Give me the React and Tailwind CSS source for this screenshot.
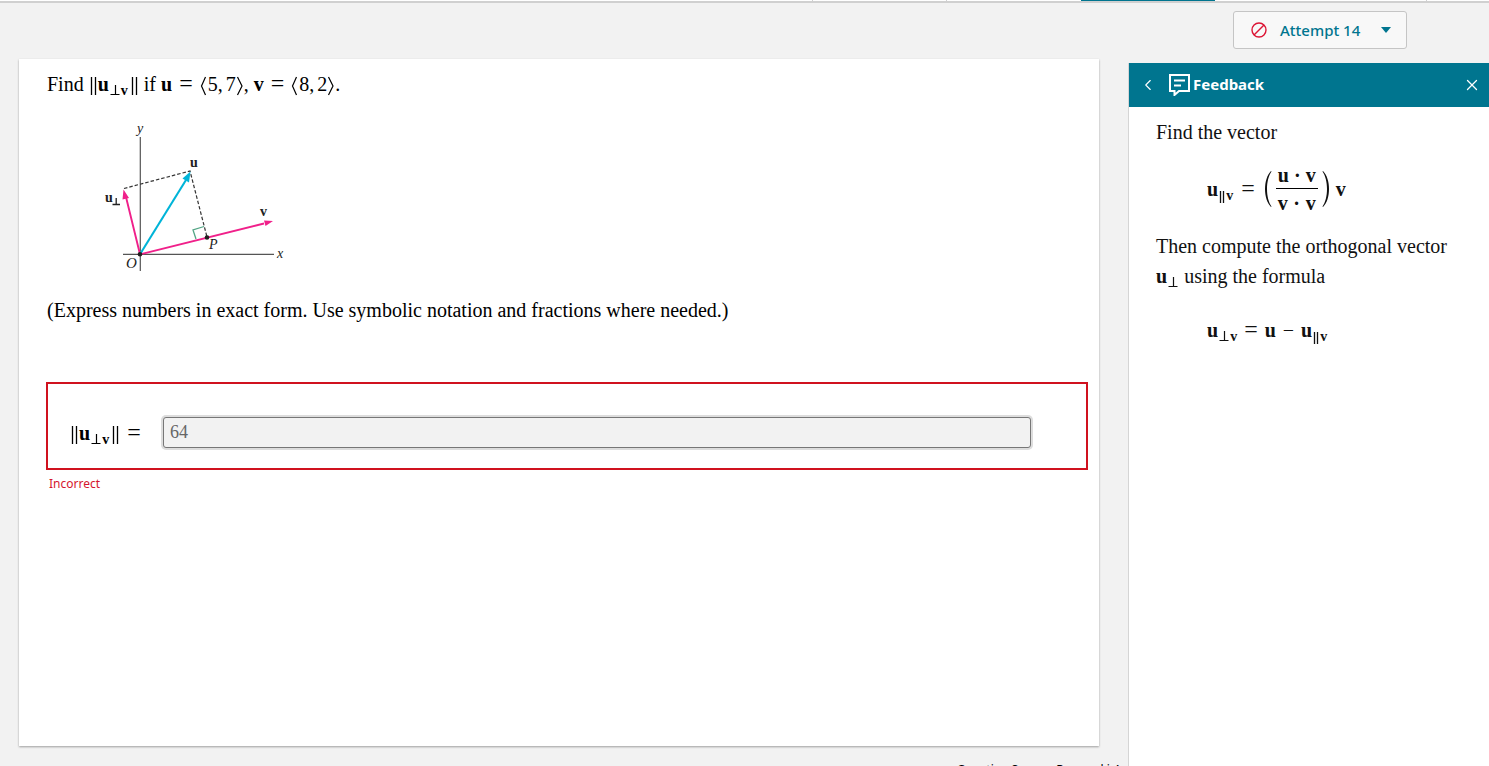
import { ChevronLeft, X } from "lucide-react";

const serif = "font-['Liberation_Serif',serif]";

function Perp() {
  return (
    <svg role="img" aria-label="perpendicular" className="inline-block h-[10px] w-[12px] align-baseline" viewBox="0 0 12 10" fill="none" stroke="currentColor">
      <path d="M1.500 9.500H10.500M6.500 0V9.500" strokeWidth="1.200" />
    </svg>
  );
}

function Bars({ small = false }) {
  return (
    <svg
      role="img"
      aria-label={small ? "parallel" : "norm"}
      className={small ? "inline-block h-3 w-[8px] align-[-3px]" : "inline-block h-[18px] w-[9px] align-[-4px]"}
      viewBox={small ? "0 0 8 12" : "0 0 9 18"}
      fill="none"
      stroke="currentColor"
      strokeWidth="1.300"
    >
      <path d={small ? "M2.500 0V12M5.500 0V12" : "M2.500 0V18M6.500 0V18"} />
    </svg>
  );
}

function Angle({ right = false }) {
  return (
    <svg role="img" aria-label={right ? "right angle bracket" : "left angle bracket"} className="inline-block h-5 w-2 align-[-5px]" viewBox="0 0 8 20" fill="none" stroke="currentColor" strokeWidth="1.200">
      <path d={right ? "M1.500 1L6 10L1.500 19" : "M5.500 1L1.500 10L5.500 19"} />
    </svg>
  );
}

function Equals() {
  return <span className="mx-[2px] text-2xl leading-none">=</span>;
}

function U({ perp = false, par = false, v = false }) {
  return (
    <span className="whitespace-nowrap">
      <b>u</b>
      <span className="inline-block align-[-4px] text-sm leading-none font-bold">
        {perp && <Perp />}
        {par && <Bars small />}
        {v && "v"}
      </span>
    </span>
  );
}

function Norm() {
  return (
    <span className="whitespace-nowrap">
      <Bars />
      <U perp v />
      <span className="ml-[2px]"><Bars /></span>
    </span>
  );
}

function Paren({ right = false }) {
  return (
    <svg role="img" aria-label={right ? "close" : "open"} className="h-[38px] w-2" viewBox="0 0 8 38" fill="currentColor">
      <path d={right ? "M1 1C9 9 9 29 1 37L.5 36.500C6.500 28 6.500 10 .5 1.500Z" : "M7 1C-1 9-1 29 7 37L7.500 36.500C1.500 28 1.500 10 7.500 1.500Z"} />
    </svg>
  );
}

function VectorDiagram() {
  return (
    <svg role="img" aria-label="Vector u resolved along v and perpendicular to v" className="h-[160px] w-[200px]" viewBox="96 118 200 160">
      <g stroke="#555" strokeWidth="1.200" fill="none">
        <path d="M140.300 137V271M123 254.300H274" />
      </g>
      <path d="M124 188.500L190 171L207 237" stroke="#333" strokeWidth="1.200" strokeDasharray="3.500 2" fill="none" />
      <path d="M196 239L193 230L204 226.500" stroke="#53a585" strokeWidth="1.300" fill="none" />
      <g stroke="#f0208a" strokeWidth="1.900" fill="none">
        <path d="M140 254.300L126 197M140 254.300L264 223.500" />
      </g>
      <g fill="#f0208a">
        <path d="M123.500 189.500L129 198L122.500 199.500ZM273 221L265.500 226L264 220.500Z" />
      </g>
      <path d="M140 254.300L186 180" stroke="#00b4d8" strokeWidth="2.100" />
      <path d="M190.500 171.500L189 182.500L182.500 178.500Z" fill="#00b4d8" />
      <g fill="#231f20">
        <circle cx="140" cy="254.300" r="2.300" />
        <circle cx="207" cy="237.500" r="2.300" />
      </g>
      <g className="font-['Liberation_Serif',serif]" fill="#222" fontSize="14">
        <text x="137" y="133" fontStyle="italic">y</text>
        <text x="277" y="258" fontStyle="italic">x</text>
        <text x="126" y="268" fontStyle="italic" fontSize="15">O</text>
        <text x="209" y="249" fontStyle="italic">P</text>
        <text x="190" y="167" fontWeight="bold">u</text>
        <text x="260" y="216" fontWeight="bold">v</text>
        <text x="105" y="202" fontWeight="bold">u</text>
      </g>
      <path d="M112.500 204.500H120M116.200 198V204.500" stroke="#222" strokeWidth="1.300" />
    </svg>
  );
}

export default function App() {
  return (
    <div className="flex h-screen flex-col overflow-hidden bg-[#f2f2f2] font-['Noto_Sans',sans-serif] text-black">
      <header className="flex h-[3px] shrink-0 justify-end border-b-2 border-[#d0d0d0] bg-white">
        <div className="h-px w-[134px] border-l border-[#d0d0d0]" />
        <div className="h-px w-[135px] border-l border-[#d0d0d0]" />
        <div className="h-px w-[134px] bg-[#00758f]" />
        <div className="h-px w-[212px] border-r border-[#d0d0d0]" />
        <div className="h-px w-[62px]" />
      </header>
      <div className="flex min-h-0 flex-1">
        <main className="flex min-w-0 flex-1 flex-col pt-14 pr-[29px] pl-[19px]">
          <section className={`${serif} min-h-[687px] bg-white px-[28px] pt-[9px] text-xl leading-8 shadow-[0_1px_2px_rgba(0,0,0,0.35)]`}>
            <p>
              Find <Norm /> if <b>u</b> <Equals /> <Angle />5,<span className="ml-[3px]">7</span><Angle right />, <b>v</b> <Equals /> <Angle />8,<span className="ml-[3px]">2</span><Angle right />.
            </p>
            <div className="mt-[18px] ml-[49px] flex">
              <VectorDiagram />
            </div>
            <p className="mt-4">(Express numbers in exact form. Use symbolic notation and fractions where needed.)</p>
            <div className="mt-[56px] -mr-[17px] -ml-px flex h-[88px] items-center border-2 border-[#d0121f] pt-[14px] pr-[55px] pl-[22px]">
              <label htmlFor="answer" className="w-[93px] whitespace-nowrap">
                <Norm /> <Equals />
              </label>
              <input
                id="answer"
                disabled
                defaultValue="64"
                className="mb-px h-[31px] min-w-0 flex-1 rounded-[3px] border border-[#777] bg-[#f2f2f2] px-[6px] text-lg text-[#666] shadow-[0_0_0_2px_#ddd]"
              />
            </div>
            <p className="ml-[2px] font-['Noto_Sans',sans-serif] text-xs leading-7 text-[#d5152e]">Incorrect</p>
          </section>
          <footer className="mt-4 pl-[938px] text-xs whitespace-nowrap">Question Source: Rogawski 4e</footer>
        </main>
        <aside className="flex w-[361px] shrink-0 flex-col">
          <div className="h-15 pt-2 pl-[105px]">
            <button className="flex h-[38px] w-[174px] items-center rounded-[3px] border border-[#c5c5c5] bg-[#f8f8f8] pl-[17px] text-[15px] font-medium text-[#00758f]">
              <svg className="size-4" viewBox="0 0 16 16" fill="none" stroke="#dc1434" strokeWidth="1.400" aria-hidden="true">
                <circle cx="8" cy="8" r="7" />
                <path d="M3 13L13 3" />
              </svg>
              <span className="ml-[13px]">Attempt 14</span>
              <svg className="ml-auto mr-[15px] h-[6px] w-[10px]" viewBox="0 0 10 6" fill="currentColor" aria-hidden="true">
                <path d="M0 0H10L5 6Z" />
              </svg>
            </button>
          </div>
          <div className="flex-1 border-l border-[#d5d5d5] bg-white">
            <div className="flex h-11 items-center bg-[#00758f] pr-2 pb-px pl-[10px] text-white">
              <button aria-label="Back"><ChevronLeft className="size-[18px]" strokeWidth={1.5} /></button>
              <svg className="ml-3 h-[22px] w-[21px]" viewBox="0 0 21 22" fill="none" stroke="currentColor" strokeWidth="2" aria-hidden="true">
                <path d="M1 1H20V17H10L5.500 21V17H1Z" />
                <path d="M5 6.500H16M5 11.500H12" />
              </svg>
              <h2 className="ml-[3px] text-[15px] font-bold">Feedback</h2>
              <button aria-label="Close" className="ml-auto"><X className="size-[18px]" strokeWidth={1.700} /></button>
            </div>
            <div className={`${serif} px-[27px] pt-[10px] text-xl leading-[30px] text-[#111]`}>
              <p>Find the vector</p>
              <div className="mt-5 ml-[51px] flex h-[44px] items-center">
                <U par v />
                <span className="ml-[6px]"><Equals /></span>
                <span className="ml-[7px] flex items-center">
                  <Paren />
                  <span className="mx-1 w-[42px] font-bold">
                    <span className="flex h-[22px] justify-between border-b border-black px-[2px] leading-4"><span>u</span><span>·</span><span>v</span></span>
                    <span className="flex h-[22px] items-end justify-between px-[2px] leading-4"><span>v</span><span>·</span><span>v</span></span>
                  </span>
                  <Paren right />
                </span>
                <b className="ml-[6px]">v</b>
              </div>
              <p className="mt-5">Then compute the orthogonal vector <U perp /> using the formula</p>
              <p className="mt-6 ml-[51px]">
                <U perp v /> <Equals /> <b>u</b> <span className="mx-[2px]">−</span> <U par v />
              </p>
            </div>
          </div>
        </aside>
      </div>
    </div>
  );
}
